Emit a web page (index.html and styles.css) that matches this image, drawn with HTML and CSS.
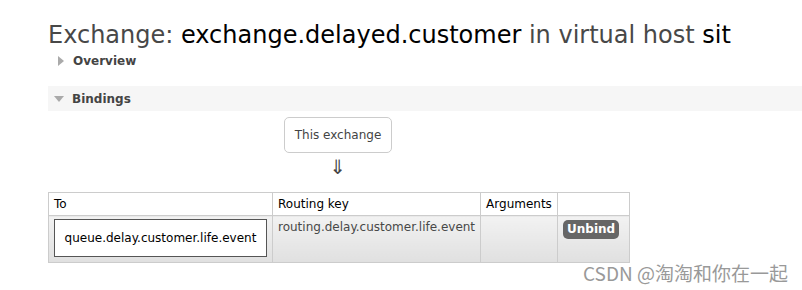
FILE: index.html
```html
<!DOCTYPE html>
<html>
<head>
<meta charset="utf-8">
<link rel="stylesheet" href="styles.css">
</head>
<body>
<div class="page">
  <h1 class="title"><span class="muted">Exchange:</span> exchange.delayed.customer <span class="muted">in virtual host</span> sit</h1>
  <div class="section closed"><span class="tri-right"></span><span class="sec-label">Overview</span></div>
  <div class="section open"><span class="tri-down"></span><span class="sec-label">Bindings</span></div>
  <div class="bindings">
    <div class="flow">
      <div class="this-ex">This exchange</div>
      <div class="arrow">&#8659;</div>
    </div>
    <table class="list">
      <thead>
        <tr><th class="c-to">To</th><th class="c-rk">Routing key</th><th class="c-args">Arguments</th><th class="c-act"></th></tr>
      </thead>
      <tbody>
        <tr>
          <td class="c-to"><div class="queue-box">queue.delay.customer.life.event</div></td>
          <td class="c-rk">routing.delay.customer.life.event</td>
          <td class="c-args"></td>
          <td class="c-act"><span class="btn">Unbind</span></td>
        </tr>
      </tbody>
    </table>
  </div>
  <div class="watermark">CSDN @淘淘和你在一起</div>
</div>
</body>
</html>
```
FILE: styles.css
```css
html, body { margin: 0; padding: 0; background: #fff; }
body { font-family: "DejaVu Sans", Verdana, sans-serif; color: #484848; }
.page { padding-left: 48px; padding-top: 19px; position: relative; height: 290px; box-sizing: border-box; }
.title { margin: 0; font-weight: normal; font-size: 24px; line-height: 32px; color: #000; letter-spacing: 0; }
.title .muted { color: #484848; }
.section { display: flex; align-items: center; font-weight: bold; font-size: 12px; color: #444; }
.section.closed { height: 20px; margin-top: 0; }
.section.open { height: 25px; margin-top: 15px; background: #f6f6f6; }
.tri-right { width: 0; height: 0; border-top: 5.5px solid transparent; border-bottom: 5.5px solid transparent; border-left: 6px solid #aaa; margin-left: 10px; margin-right: 9px; }
.tri-down { width: 0; height: 0; border-left: 5.5px solid transparent; border-right: 5.5px solid transparent; border-top: 6px solid #aaa; margin-left: 6px; margin-right: 8px; }
.sec-label { display: block; }
.bindings { padding-top: 6px; }
.flow { display: flex; flex-direction: column; align-items: center; width: 580px; }
.this-ex { border: 1px solid #ccc; border-radius: 5px; padding: 0 10px; height: 34px; line-height: 34px; font-size: 12px; color: #444; }
.arrow { font-size: 20px; line-height: 24px; color: #444; margin-top: 2px; }
.list { border-collapse: collapse; margin-top: 13px; font-size: 12px; }
.list th { text-align: left; font-weight: normal; color: #000; border: 1px solid #ccc; height: 22px; padding: 0 5px; background: #fff; }
.list td { border: 1px solid #ccc; vertical-align: top; padding: 4px 5px; background: linear-gradient(#f2f2f2, #e0e0e0); color: #484848; height: 38px; }
.c-to { width: 213px; }
.c-rk { width: 197px; }
.c-args { width: 66px; }
.c-act { width: 61px; }
.list td.c-to { padding: 3px 5px; }
.queue-box { background: #fff; border: 1px solid #555; height: 36px; line-height: 36px; text-align: center; color: #000; }
.btn { display: inline-block; background: #666; color: #fff; font-weight: bold; border-radius: 5px; padding: 0 4px; height: 19px; line-height: 19px; margin-top: 0; }
.watermark { position: absolute; right: 14px; top: 259px; font-family: "Noto Sans CJK SC", sans-serif; font-size: 19px; color: #999; }
```
